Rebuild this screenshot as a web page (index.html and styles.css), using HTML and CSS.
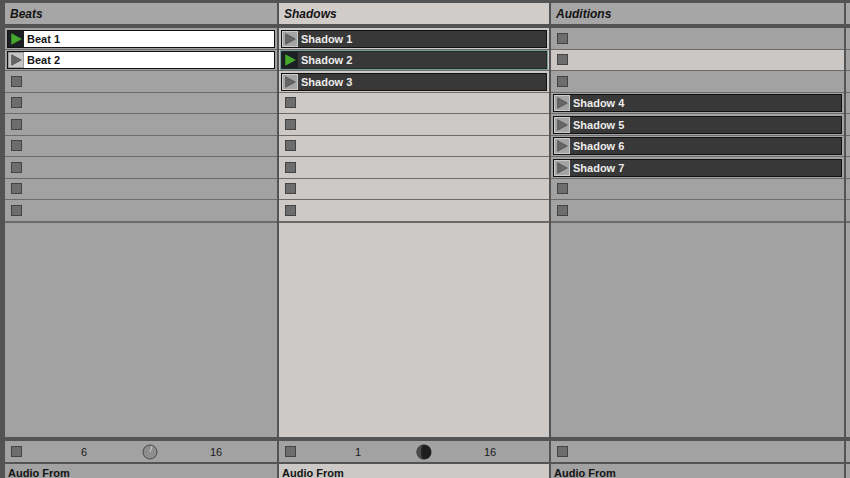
FILE: index.html
```html
<!DOCTYPE html>
<html>
<head>
<meta charset="utf-8">
<link rel="stylesheet" href="styles.css">
</head>
<body>
<div class="tracks">
  <div class="col gray w1">
    <div class="hdr">Beats</div>
    <div class="slots">
      <div class="slot"><div class="clip white"><span class="play playing"><svg viewBox="0 0 16 16"><polygon points="3,2 14,8 3,14"/></svg></span><span class="name">Beat 1</span></div></div>
      <div class="slot"><div class="clip white"><span class="play"><svg viewBox="0 0 16 16"><polygon points="3,2 14,8 3,14"/></svg></span><span class="name">Beat 2</span></div></div>
      <div class="slot"><span class="stop"></span></div>
      <div class="slot"><span class="stop"></span></div>
      <div class="slot"><span class="stop"></span></div>
      <div class="slot"><span class="stop"></span></div>
      <div class="slot"><span class="stop"></span></div>
      <div class="slot"><span class="stop"></span></div>
      <div class="slot"><span class="stop"></span></div>
    </div>
    <div class="fill"></div>
    <div class="ctrl">
      <span class="stop"></span>
      <span class="cell num">6</span>
      <span class="cell"><svg class="knob" viewBox="0 0 16 16"><circle cx="8" cy="8" r="7" fill="#8e8e8e" stroke="#4a4a4a" stroke-width="1"/><line x1="8" y1="8" x2="10" y2="2" stroke="#c4c4c4" stroke-width="1.2"/></svg></span>
      <span class="cell num">16</span>
    </div>
    <div class="io">Audio From</div>
  </div>
  <div class="col light w2">
    <div class="hdr">Shadows</div>
    <div class="slots">
      <div class="slot"><div class="clip dark"><span class="play"><svg viewBox="0 0 16 16"><polygon points="3,2 14,8 3,14"/></svg></span><span class="name">Shadow 1</span></div></div>
      <div class="slot"><div class="clip dark sel"><span class="play playing"><svg viewBox="0 0 16 16"><polygon points="3,2 14,8 3,14"/></svg></span><span class="name">Shadow 2</span></div></div>
      <div class="slot"><div class="clip dark"><span class="play"><svg viewBox="0 0 16 16"><polygon points="3,2 14,8 3,14"/></svg></span><span class="name">Shadow 3</span></div></div>
      <div class="slot"><span class="stop"></span></div>
      <div class="slot"><span class="stop"></span></div>
      <div class="slot"><span class="stop"></span></div>
      <div class="slot"><span class="stop"></span></div>
      <div class="slot"><span class="stop"></span></div>
      <div class="slot"><span class="stop"></span></div>
    </div>
    <div class="fill"></div>
    <div class="ctrl">
      <span class="stop"></span>
      <span class="cell num">1</span>
      <span class="cell"><svg class="knob" viewBox="0 0 16 16"><circle cx="8" cy="8" r="7.5" fill="#1e1e1e"/><path d="M8 0.5 A7.5 7.5 0 0 0 8 15.5 A3 7.5 0 0 1 8 0.5 Z" fill="#4a4a4a"/></svg></span>
      <span class="cell num">16</span>
    </div>
    <div class="io">Audio From</div>
  </div>
  <div class="col gray w3">
    <div class="hdr">Auditions</div>
    <div class="slots">
      <div class="slot"><span class="stop"></span></div>
      <div class="slot hl"><span class="stop"></span></div>
      <div class="slot"><span class="stop"></span></div>
      <div class="slot"><div class="clip dark"><span class="play"><svg viewBox="0 0 16 16"><polygon points="3,2 14,8 3,14"/></svg></span><span class="name">Shadow 4</span></div></div>
      <div class="slot"><div class="clip dark"><span class="play"><svg viewBox="0 0 16 16"><polygon points="3,2 14,8 3,14"/></svg></span><span class="name">Shadow 5</span></div></div>
      <div class="slot"><div class="clip dark"><span class="play"><svg viewBox="0 0 16 16"><polygon points="3,2 14,8 3,14"/></svg></span><span class="name">Shadow 6</span></div></div>
      <div class="slot"><div class="clip dark"><span class="play"><svg viewBox="0 0 16 16"><polygon points="3,2 14,8 3,14"/></svg></span><span class="name">Shadow 7</span></div></div>
      <div class="slot"><span class="stop"></span></div>
      <div class="slot"><span class="stop"></span></div>
    </div>
    <div class="fill"></div>
    <div class="ctrl">
      <span class="stop"></span>
    </div>
    <div class="io">Audio From</div>
  </div>
  <div class="col gray w4">
    <div class="hdr"></div>
    <div class="slots">
      <div class="slot"></div><div class="slot"></div><div class="slot"></div>
      <div class="slot"></div><div class="slot"></div><div class="slot"></div>
      <div class="slot"></div><div class="slot"></div><div class="slot"></div>
    </div>
    <div class="fill"></div>
    <div class="ctrl"></div>
    <div class="io"></div>
  </div>
</div>
</body>
</html>
```
FILE: styles.css
```css
* { box-sizing: border-box; }
html, body {
  margin: 0;
  padding: 0;
  width: 850px;
  height: 478px;
  overflow: hidden;
  background: #535353;
  font-family: "Liberation Sans", Arial, sans-serif;
  color: #141414;
}
.tracks {
  display: flex;
  align-items: flex-start;
  padding-left: 5px;
  gap: 2px;
}
.col {
  display: flex;
  flex-direction: column;
  flex: none;
}
.w1 { width: 272px; }
.w2 { width: 270px; }
.w3 { width: 293px; }
.w4 { width: 10px; }

.hdr {
  height: 21px;
  margin-top: 3px;
  padding-left: 5px;
  font-size: 12px;
  font-weight: bold;
  font-style: italic;
  line-height: 22px;
  color: #141414;
}
.gray .hdr { background: #a6a6a6; }
.light .hdr { background: #d0ccc9; }

.slots { margin-top: 4px; }
.slot {
  height: 21.5px;
  border-bottom: 1px solid #6b6b6b;
  display: flex;
  align-items: center;
  padding: 0 2px;
}
.gray .slot { background: #a2a2a2; }
.light .slot { background: #cdc9c6; }
.gray .slot.hl { background: #cbc7c4; }

.stop {
  width: 11px;
  height: 11px;
  margin-left: 4px;
  background: #6d6d6d;
  border: 1px solid #444;
  flex: none;
}

.clip {
  width: 100%;
  height: 18px;
  margin-top: 1px;
  border: 1px solid #111;
  display: flex;
  align-items: center;
  font-size: 11px;
  font-weight: bold;
}
.clip.white { background: #fff; color: #151515; }
.clip.dark { background: #383838; color: #ececec; }
.clip.dark.sel { border-color: #1c2a2a; box-shadow: 0 0 0 1px #7e9c9c; }
.play {
  width: 16px;
  height: 16px;
  flex: none;
  display: flex;
  align-items: center;
  background: #c4c4c4;
  border: 1px solid #9a9a9a;
}
.dark .play { background: #a4a4a4; border-color: #cacaca; }
.play svg { width: 14px; height: 14px; }
.play polygon { fill: #666; stroke: #4a4a4a; stroke-width: 0.8; }
.play.playing { background: #1c2024; border-color: #1c2024; }
.play.playing polygon { fill: #45aa2c; stroke: #45aa2c; }
.name { padding-left: 3px; white-space: nowrap; }

.fill {
  flex: none;
  height: 215px;
  border-top: 1px solid #6b6b6b;
  margin-bottom: 4px;
}
.gray .fill { background: #a2a2a2; }
.light .fill { background: #cdc9c6; }

.ctrl {
  height: 21px;
  display: flex;
  align-items: center;
  padding-left: 6px;
  padding-top: 1px;
  font-size: 11px;
  background: #a2a2a2;
}
.ctrl .stop { margin-left: 0; margin-right: 29px; }
.cell {
  width: 66px;
  display: flex;
  justify-content: center;
  align-items: center;
  color: #1a1a1a;
}
.knob { width: 16px; height: 16px; }

.io {
  height: 30px;
  margin-top: 2px;
  padding: 3px 0 0 3px;
  font-size: 11px;
  font-weight: bold;
  color: #141414;
}
.gray .io { background: #a2a2a2; }
.light .io { background: #cdc9c6; }
```
